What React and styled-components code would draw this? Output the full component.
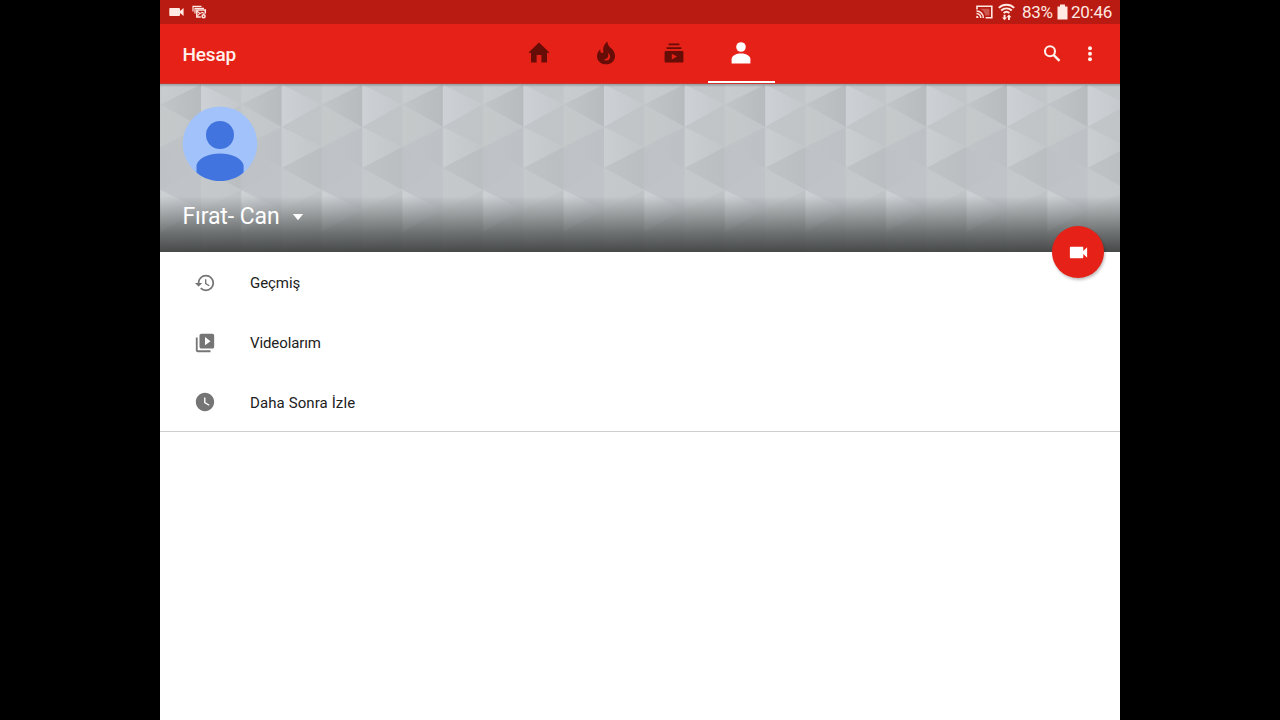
import React from "react";
import styled, { createGlobalStyle } from "styled-components";
import {
  MdHistory,
  MdVideoLibrary,
  MdVideocam,
  MdWatchLater,
} from "react-icons/md";

const GlobalStyle = createGlobalStyle`
  * { box-sizing: border-box; }
  body { margin: 0; background: #000; font-family: Roboto, "Noto Sans", sans-serif; }
  svg { display: block; flex: none; }
`;

const Stage = styled.div`
  display: flex;
  justify-content: center;
  height: 720px;
  overflow: hidden;
  background: #000;
`;

const Screen = styled.div`
  display: flex;
  flex-direction: column;
  width: 960px;
  background: #fff;
`;

const StatusBar = styled.div`
  display: flex;
  align-items: center;
  justify-content: space-between;
  height: 24px;
  padding: 0 8px 0 9px;
  background: #b91b12;
  color: #ffe9e2;
`;

const StatusGroup = styled.div`
  display: flex;
  align-items: center;
  gap: ${(p) => p.$gap}px;
`;

const StatusText = styled.span`
  width: ${(p) => p.$width}px;
  font-size: 17px;
  line-height: 24px;
  white-space: nowrap;
  letter-spacing: ${(p) => p.$spacing || 0}px;
`;

const AppBar = styled.header`
  display: grid;
  grid-template-columns: 345px 270px 1fr;
  height: 60px;
  background: #e62117;
  border-bottom: 1px solid #c9382f;
  color: #fff;
`;

const Title = styled.h1`
  margin: 0;
  padding-left: 22.5px;
  font-size: 19px;
  font-weight: 500;
  letter-spacing: -0.15px;
  line-height: 61px;
  color: #fff1ec;
`;

const Tabs = styled.nav`
  display: flex;
`;

const Tab = styled.div`
  display: flex;
  align-items: center;
  justify-content: center;
  width: 67.5px;
  height: 59px;
  padding-bottom: 1px;
  color: ${(p) => (p.$active ? "#fff" : "#670d07")};
  box-shadow: ${(p) => (p.$active ? "inset 0 -2px #fff" : "none")};
`;

const Actions = styled.div`
  display: flex;
  align-items: center;
  justify-content: flex-end;
  gap: 16px;
  padding: 0 19px 1px 0;
  color: #fff1ec;
`;

const Banner = styled.section`
  position: relative;
  height: 168px;
`;

const BannerArt = styled.svg`
  position: absolute;
  inset: 0;
`;

const Shade = styled.div`
  position: absolute;
  inset: 0;
  background: linear-gradient(
    to bottom,
    rgba(70, 72, 72, 0.35) 0,
    transparent 3px,
    transparent 112px,
    rgba(50, 52, 51, 0.28) 130px,
    rgba(50, 52, 51, 0.6) 150px,
    rgba(50, 52, 51, 0.85) 168px
  );
`;

const Profile = styled.div`
  position: relative;
  display: flex;
  flex-direction: column;
  align-items: flex-start;
  padding: 22px 0 0 22px;
`;

const Account = styled.div`
  display: flex;
  align-items: center;
  gap: 13px;
  margin-top: 21px;
  color: #fff;
  font-size: 23px;
  line-height: 28px;
`;

const AccountName = styled.span`
  width: 97px;
  padding-left: 0.5px;
  letter-spacing: -0.1px;
  white-space: nowrap;
`;

const RecordButton = styled.button`
  position: absolute;
  right: 16px;
  bottom: -26px;
  display: flex;
  align-items: center;
  justify-content: center;
  width: 52px;
  height: 52px;
  padding: 0;
  border: 0;
  border-radius: 50%;
  background: #e62117;
  color: #fff;
  box-shadow: 1px 2px 3px rgba(0, 0, 0, 0.25);
`;

const Menu = styled.ul`
  margin: 0;
  padding: 0;
  list-style: none;
  border-bottom: 1px solid #cfcfcf;
`;

const MenuItem = styled.li`
  display: flex;
  align-items: center;
  gap: 34.5px;
  height: 60px;
  padding: 1px 0 0 33.5px;
  color: #757575;

  &:last-child { height: 59px; }
`;

const MenuLabel = styled.span`
  padding-top: 1px;
  color: #212121;
  font-size: 15px;
  line-height: 20px;
  letter-spacing: ${(p) => p.$spacing}px;
`;

const HomeIcon = () => (
  <svg width="22" height="22" viewBox="0 0 22 22" fill="currentColor">
    <path d="M11 0.5 0.3 10.7H3V20.5h5.6v-7.6h4.8v7.6H19v-9.8h2.7z" />
  </svg>
);

const FlameIcon = () => (
  <svg width="20" height="24" viewBox="0 0 20 24" fill="currentColor">
    <path
      fillRule="evenodd"
      d="M11.6 0.6C7.8 3.3 6.7 7.4 7.4 10.3C7.6 11.3 6.9 12.1 6 12.1C4.6 12.1 4.1 10.500 4.4 8.3C2.2 10.2 1 12.500 1 15.2C1 19.8 4.8 23.3 9.9 23.3C15.3 23.3 19 19.7 19 14.9C19 11.8 17.5 9.3 15.1 7.3C12.7 5.3 11.2 3.3 11.6 0.6zM11.7 11.6C13.6 13.2 14.3 14.7 14.1 16.3C13.9 18.3 12.3 19.7 10.2 19.600C9 19.500 8.2 19.1 7.8 18.500C10.6 18.300 12.2 16.900 12.3 14.600C12.4 13.500 12.1 12.500 11.7 11.600z"
    />
  </svg>
);

const SubscriptionsIcon = () => (
  <svg width="20" height="20" viewBox="0 0 20 20" fill="currentColor">
    <path d="M4.6 0.6h10.8v1.6H4.6zM2.6 4.3h14.8v1.6H2.6z" />
    <path
      fillRule="evenodd"
      d="M1.6 7.9h16.8a1 1 0 0 1 1 1v9.7a1 1 0 0 1-1 1H1.6a1 1 0 0 1-1-1V8.9a1 1 0 0 1 1-1zM7.8 10.8v5.6l5.2-2.8z"
    />
  </svg>
);

const PersonIcon = () => (
  <svg width="20" height="22" viewBox="0 0 20 22" fill="currentColor">
    <circle cx="10" cy="5" r="4.8" />
    <path d="M0.6 21.4v-4.2c0-3.7 5-5.6 9.4-5.6s9.4 1.9 9.4 5.6v4.2z" />
  </svg>
);

const SearchIcon = () => (
  <svg width="22" height="22" viewBox="0 0 22 22" fill="none" stroke="currentColor">
    <circle cx="9" cy="8.3" r="5" strokeWidth="2.1" />
    <path d="M12.500 11.800l6 6" strokeWidth="2.500" />
  </svg>
);

const MoreIcon = () => (
  <svg width="22" height="22" viewBox="0 0 22 22" fill="currentColor">
    <circle cx="11" cy="5.200" r="2" />
    <circle cx="11" cy="10.700" r="2" />
    <circle cx="11" cy="16.200" r="2" />
  </svg>
);

const ScreenshotIcon = () => (
  <svg width="15" height="14" viewBox="0 0 15 14" fill="none" stroke="currentColor">
    <path d="M1 6.5V1.3h8.5M3 8.5V3.3h9" strokeWidth="1.2" />
    <path d="M13.3 8.5V5H4.8v7H8.8" strokeWidth="1.5" />
    <path d="M5 6l3 2.600 2 -1.200 2.500 1M5.500 11l2.200-2.500" strokeWidth="1.100" />
    <circle cx="11.6" cy="11.3" r="1.5" strokeWidth="1.5" />
  </svg>
);

const CastIcon = () => (
  <svg width="17" height="14" viewBox="0 0 17 14" fill="none" stroke="currentColor">
    <path d="M1 4.5V1.3h14.8v11.4H9.6" strokeWidth="1.6" />
    <path d="M0.5 5.9a6.8 6.8 0 0 1 6.8 7M0.5 8.5a4.3 4.3 0 0 1 4.3 4.4" strokeWidth="1.5" />
    <path d="M0.3 10.8v2.3h2.3a2.3 2.3 0 0 0-2.3-2.3z" fill="currentColor" stroke="none" />
    <path d="M3.6 3.7h9.8v6.8h-4A9 9 0 0 0 3.6 3.7z" fill="currentColor" fillOpacity="0.3" stroke="none" />
  </svg>
);

const WifiIcon = () => (
  <svg width="17" height="18" viewBox="0 0 17 18" fill="none" stroke="currentColor">
    <path
      d="M0.8 4.9C5 0.7 12 0.7 16.2 4.9M3.2 7.5c3-2.9 7.6-2.9 10.6 0M5.6 10c1.7-1.6 4.1-1.6 5.8 0"
      strokeWidth="1.9"
    />
    <path
      d="M6.5 17.3l-2.4-2.8h1.5v-2.7h1.9v2.7h1.5zM11 11.4l2.4 2.8h-1.5v2.9H10v-2.9H8.5z"
      fill="currentColor"
      stroke="none"
    />
  </svg>
);

const BatteryIcon = () => (
  <svg width="11" height="16" viewBox="0 0 11 16" fill="currentColor">
    <path d="M3 0.5h5v2h2.5v13H0.5v-13H3z" />
  </svg>
);

const CameraIcon = () => (
  <svg width="15" height="10" viewBox="0 0 15 10" fill="currentColor">
    <path d="M1 1h9a1 1 0 0 1 1 1v1.9L14.6 1v8L11 6.1V8a1 1 0 0 1-1 1H1a1 1 0 0 1-.7-1V2A1 1 0 0 1 1 1z" />
  </svg>
);

const Avatar = () => (
  <svg width="76" height="76" viewBox="0 0 76 76">
    <circle cx="38" cy="37.8" r="37.3" fill="#a1c2fa" />
    <circle cx="38" cy="29" r="14" fill="#4274df" />
    <path
      d="M14.5 59C17 51.5 27 47.5 38 47.5S59 51.5 61.6 59v7.5C55 72 47 75.1 38 75.1S21 72 14.5 66.5z"
      fill="#4274df"
    />
  </svg>
);

const CaretIcon = () => (
  <svg width="12" height="8" viewBox="0 0 12 8" fill="currentColor">
    <path d="M0.8 1h10.4L6 7.3z" />
  </svg>
);

const TRIANGLES = [
  ["0,0.5 0,-22 40.3,-22 40.3,20.5", "#c3c7ca", "#c2c6c9"],
  ["40.3,20.5 40.3,-22 80.6,-22 80.6,0.5", "#c9cccf", "#c4c8cb"],
  ["0,0.5 40.3,20.5 0,43", "#cdd0d4", "#c4c8cb"],
  ["0,43 40.3,20.5 40.3,63", "#c2c6c9", "#c0c4c7"],
  ["0,43 40.3,63 0,84", "#caced1", "#c2c6c9"],
  ["0,84 40.3,63 40.3,106", "#bfc3c6", "#babec1"],
  ["0,84 40.3,106 0,126", "#c5c9cc", "#c3c7ca"],
  ["0,126 40.3,106 40.3,148", "#c4c8ca", "#bec2c5"],
  ["0,126 40.3,148 0,168", "#c3c7ca", "#bec2c5"],
  ["0,168 40.3,148 40.3,168", "#c0c4c7", "#bec2c5"],
  ["40.3,20.5 80.6,0.5 80.6,43", "#c1c5c8", "#b7bbbe"],
  ["40.3,20.5 80.6,43 40.3,63", "#c5c9ca", "#c2c6c9"],
  ["40.3,63 80.6,43 80.6,84", "#c0c4c7", "#bdc1c5"],
  ["40.3,63 80.6,84 40.3,106", "#bec2c6", "#c0c4c8"],
  ["40.3,106 80.6,84 80.6,126", "#c0c4c8", "#c0c4c8"],
  ["40.3,106 80.6,126 40.3,148", "#cdd1d4", "#c0c4c8"],
  ["40.3,148 80.6,126 80.6,168 40.3,168", "#c3c7ca", "#bfc3c6"],
];

const BannerPattern = () => (
  <BannerArt width="960" height="168" viewBox="0 0 960 168">
    <defs>
      {TRIANGLES.map(([, from, to], i) => (
        <linearGradient key={i} id={`facet${i}`}>
          <stop offset="0" stopColor={from} />
          <stop offset="1" stopColor={to} />
        </linearGradient>
      ))}
      <pattern id="facets" patternUnits="userSpaceOnUse" x="41" width="80.6" height="168">
        <rect width="80.6" height="168" fill="#c2c6c9" />
        {TRIANGLES.map(([points], i) => (
          <polygon key={i} points={points} fill={`url(#facet${i})`} />
        ))}
      </pattern>
    </defs>
    <rect width="960" height="168" fill="url(#facets)" />
  </BannerArt>
);

const tabs = [
  { id: "home", icon: <HomeIcon /> },
  { id: "trending", icon: <FlameIcon /> },
  { id: "subscriptions", icon: <SubscriptionsIcon /> },
  { id: "account", icon: <PersonIcon />, active: true },
];

const menu = [
  { label: "Geçmiş", icon: <MdHistory size={22} />, spacing: -0.05 },
  { label: "Videolarım", icon: <MdVideoLibrary size={22} />, spacing: -0.1 },
  { label: "Daha Sonra İzle", icon: <MdWatchLater size={22} />, spacing: 0.1 },
];

export default function App() {
  return (
    <Stage>
      <GlobalStyle />
      <Screen>
        <StatusBar>
          <StatusGroup $gap={8}>
            <CameraIcon />
            <ScreenshotIcon />
          </StatusGroup>
          <StatusGroup $gap={7}>
            <StatusGroup $gap={5}>
              <CastIcon />
              <WifiIcon />
            </StatusGroup>
            <StatusGroup $gap={3}>
              <StatusText $width={32} $spacing={-0.3}>83%</StatusText>
              <BatteryIcon />
              <StatusText $width={41} $spacing={-0.25}>20:46</StatusText>
            </StatusGroup>
          </StatusGroup>
        </StatusBar>
        <AppBar>
          <Title>Hesap</Title>
          <Tabs>
            {tabs.map((tab) => (
              <Tab key={tab.id} $active={tab.active}>{tab.icon}</Tab>
            ))}
          </Tabs>
          <Actions>
            <SearchIcon />
            <MoreIcon />
          </Actions>
        </AppBar>
        <Banner>
          <BannerPattern />
          <Shade />
          <Profile>
            <Avatar />
            <Account>
              <AccountName>Fırat- Can</AccountName>
              <CaretIcon />
            </Account>
          </Profile>
          <RecordButton>
            <MdVideocam size={23} />
          </RecordButton>
        </Banner>
        <Menu>
          {menu.map((item) => (
            <MenuItem key={item.label}>
              {item.icon}
              <MenuLabel $spacing={item.spacing}>{item.label}</MenuLabel>
            </MenuItem>
          ))}
        </Menu>
      </Screen>
    </Stage>
  );
}
